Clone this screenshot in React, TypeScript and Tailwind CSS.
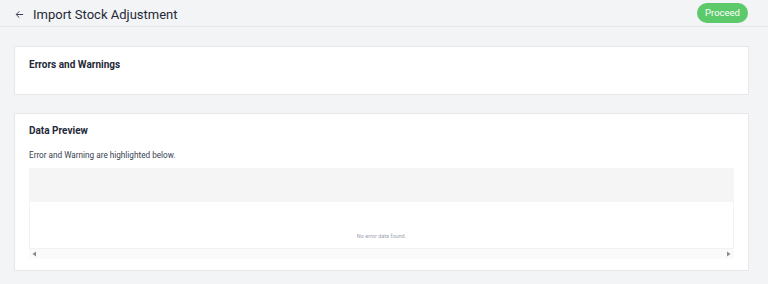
import React from "react";

export default function App() {
  return (
    <div
      className="w-full min-h-[284px] bg-[#f3f4f6] text-[#1f2937]"
      style={{ fontFamily: "Roboto, 'Liberation Sans', sans-serif" }}
    >
      <header className="h-[27px] flex items-center justify-between border-b border-[#e6e8eb] pl-[15px] pr-[20px]">
        <div className="flex items-center pt-[2px]">
          <svg width="9" height="9" viewBox="0 0 10 10" className="text-[#374151]">
            <path d="M9 5H1.5M4.8 1.5L1.3 5l3.5 3.5" fill="none" stroke="currentColor" strokeWidth="1.1" />
          </svg>
          <span className="ml-[9px] text-[13px] leading-none text-[#1f2937]">Import Stock Adjustment</span>
        </div>
        <button className="h-[20px] w-[51px] rounded-full bg-[#5cc96b] text-white text-[9.5px] leading-none flex items-center justify-center">
          Proceed
        </button>
      </header>
      <main className="px-[14px] pt-[19px] pr-[19px] flex flex-col gap-[18px]">
        <section className="h-[49px] bg-white border border-[#e5e7eb] px-[14px] pt-[12px]">
          <h2 className="text-[10px] font-bold leading-[12px] text-[#1f2937]">Errors and Warnings</h2>
        </section>
        <section className="h-[158px] bg-white border border-[#e5e7eb] px-[14px] pt-[11px]">
          <h2 className="text-[10px] font-bold leading-[12px] text-[#1f2937]">Data Preview</h2>
          <p className="mt-[13px] text-[8.2px] leading-[10px] text-[#374151]">Error and Warning are highlighted below.</p>
          <div className="mt-[8px]">
            <div className="h-[34px] bg-[#f5f5f5]" />
            <div className="h-[47px] border-x border-b border-[#f2f2f2] flex items-end justify-center pb-[9px]">
              <span className="text-[5.5px] leading-none text-[#9ca3af]">No error data found.</span>
            </div>
            <div className="h-[10px] bg-[#fafafa] flex items-center justify-between px-[3px]">
              <svg width="5" height="6" viewBox="0 0 5 6"><path d="M4 0.5L0.5 3 4 5.5z" fill="#8a8a8a" /></svg>
              <svg width="5" height="6" viewBox="0 0 5 6"><path d="M1 0.5L4.5 3 1 5.5z" fill="#8a8a8a" /></svg>
            </div>
          </div>
        </section>
      </main>
    </div>
  );
}
